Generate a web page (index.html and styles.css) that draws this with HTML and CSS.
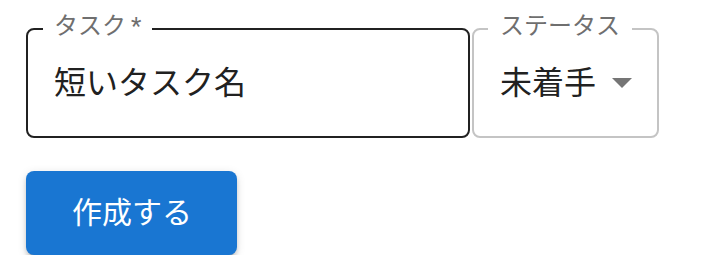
FILE: index.html
```html
<!DOCTYPE html>
<html lang="ja">
<head>
<meta charset="utf-8">
<title>タスク作成</title>
<link rel="stylesheet" href="styles.css">
</head>
<body>
<form class="form">
  <div class="row">
    <div class="field field-task">
      <span class="label">タスク&thinsp;*</span>
      <span class="value">短いタスク名</span>
    </div>
    <div class="field field-status">
      <span class="label">ステータス</span>
      <span class="value">未着手</span>
      <svg class="arrow" width="20" height="10" viewBox="0 0 20 10" aria-hidden="true"><path d="M0 0 L10 10 L20 0 Z" fill="#757575"/></svg>
    </div>
  </div>
  <div class="actions">
    <button type="button" class="btn">作成する</button>
  </div>
</form>
</body>
</html>
```

FILE: styles.css
```css
* { box-sizing: border-box; }
html, body { margin: 0; padding: 0; background: #fff; }
body {
  font-family: Roboto, "Noto Sans CJK JP", sans-serif;
  color: #212121;
}
.form {
  padding: 28px 26px 0;
  display: flex;
  flex-direction: column;
  gap: 33px;
}
.row {
  display: flex;
  gap: 2px;
}
.field {
  position: relative;
  height: 110px;
  border-radius: 8px;
  display: flex;
  align-items: center;
  padding: 0 26px;
}
.field-task {
  width: 444px;
  border: 2px solid #212121;
}
.field-status {
  width: 187px;
  border: 2px solid #c4c4c4;
}
.label {
  position: absolute;
  top: -18px;
  left: 15px;
  padding: 0 11px;
  background: #fff;
  font-size: 24px;
  line-height: 28px;
  color: #6f6f6f;
  white-space: nowrap;
}
.field-status .label {
  left: 14px;
  padding: 0 12px;
}
.value {
  font-size: 32px;
  line-height: 40px;
  color: #212121;
  white-space: nowrap;
}
.arrow {
  margin-left: 16px;
  flex: none;
}
.actions { display: flex; }
.btn {
  font-family: Roboto, "Noto Sans CJK JP", sans-serif;
  font-size: 30px;
  line-height: 52px;
  padding: 16px 45px 16px 46px;
  border: 0;
  border-radius: 8px;
  background: #1976d2;
  color: #fff;
  box-shadow: 0 6px 2px -4px rgba(0,0,0,0.2), 0 4px 4px 0 rgba(0,0,0,0.14), 0 2px 10px 0 rgba(0,0,0,0.12);
  cursor: pointer;
}
```
